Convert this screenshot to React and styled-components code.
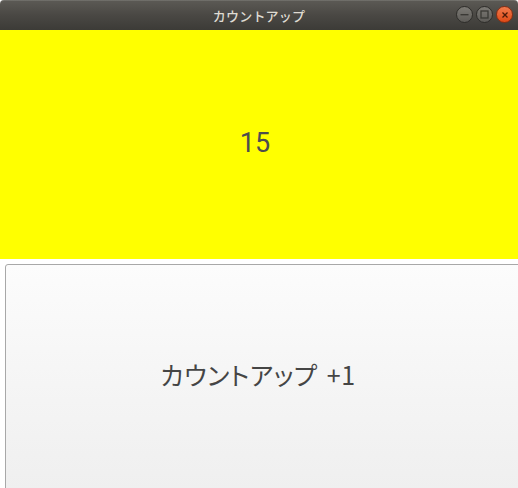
import styled, { createGlobalStyle } from "styled-components";
import { useState } from "react";

const GlobalStyle = createGlobalStyle`
  html, body {
    margin: 0;
    padding: 0;
    background: #ffffff;
    overflow: hidden;
  }
`;

const Window = styled.div`
  width: 518px;
  height: 488px;
  display: flex;
  flex-direction: column;
  overflow: hidden;
  background: #ffffff;
  font-family: "Noto Sans CJK JP", "Noto Sans", Roboto, sans-serif;
`;

const TitleBar = styled.div`
  height: 30px;
  flex: none;
  display: flex;
  align-items: center;
  justify-content: center;
  position: relative;
  background: linear-gradient(to bottom, #5c5a55 0%, #4a4844 50%, #3c3b37 100%);
  border-radius: 4px 4px 0 0;
  box-shadow: inset 0 1px 0 rgba(255, 255, 255, 0.12);
`;

const Title = styled.span`
  color: #dfdbd2;
  font-size: 13px;
  font-weight: 500;
  letter-spacing: 0.2px;
`;

const Controls = styled.div`
  position: absolute;
  right: 5px;
  top: 6px;
  display: flex;
  gap: 3px;
`;

const Circle = styled.div`
  width: 17px;
  height: 17px;
  border-radius: 50%;
  box-sizing: border-box;
  border: 1px solid ${(p) => (p.$close ? "#8a2e12" : "#2e2d2a")};
  background: ${(p) =>
    p.$close
      ? "linear-gradient(to bottom, #f07a4c, #df4a16)"
      : "linear-gradient(to bottom, #7c7a75, #5d5b57)"};
  display: flex;
  align-items: center;
  justify-content: center;
`;

const Display = styled.div`
  height: 229px;
  flex: none;
  background: #ffff00;
  display: flex;
  align-items: center;
  justify-content: center;
  padding: 0 8px 4px 0;
  box-sizing: border-box;
  color: #4d4d4d;
  font-family: Roboto, "Noto Sans CJK JP", sans-serif;
  font-size: 27px;
`;

const ButtonArea = styled.div`
  flex: 1;
  padding: 5px 0 0 5px;
  display: flex;
  min-height: 0;
`;

const CountButton = styled.button`
  flex: none;
  width: 522px;
  height: 228px;
  box-sizing: border-box;
  border: 1px solid #a8a8a8;
  border-radius: 3px;
  background: linear-gradient(to bottom, #fcfcfc 0%, #f4f4f4 60%, #efefef 100%);
  color: #454545;
  font-family: "Noto Sans CJK JP", Roboto, sans-serif;
  font-feature-settings: "palt";
  font-size: 25px;
  letter-spacing: 0.6px;
  word-spacing: 3px;
  padding: 0 16px 8px 0;
  cursor: pointer;
  display: flex;
  align-items: center;
  justify-content: center;

  &:hover {
    background: linear-gradient(to bottom, #ffffff 0%, #f7f7f7 100%);
  }
`;

export default function App() {
  const [count, setCount] = useState(15);

  return (
    <>
      <GlobalStyle />
      <Window>
        <TitleBar>
          <Title>カウントアップ</Title>
          <Controls>
            <Circle>
              <svg width="9" height="9" viewBox="0 0 9 9">
                <rect x="0.5" y="4" width="8" height="1.4" fill="#3a3935" />
              </svg>
            </Circle>
            <Circle>
              <svg width="9" height="9" viewBox="0 0 9 9">
                <rect x="1" y="1" width="7" height="7" fill="none" stroke="#3a3935" strokeWidth="1.3" />
              </svg>
            </Circle>
            <Circle $close>
              <svg width="8" height="8" viewBox="0 0 8 8">
                <path d="M1.5 1.5 L6.5 6.5 M6.5 1.5 L1.5 6.5" stroke="#4a1a08" strokeWidth="1.3" />
              </svg>
            </Circle>
          </Controls>
        </TitleBar>
        <Display>{count}</Display>
        <ButtonArea>
          <CountButton onClick={() => setCount(count + 1)}>カウントアップ +1</CountButton>
        </ButtonArea>
      </Window>
    </>
  );
}
